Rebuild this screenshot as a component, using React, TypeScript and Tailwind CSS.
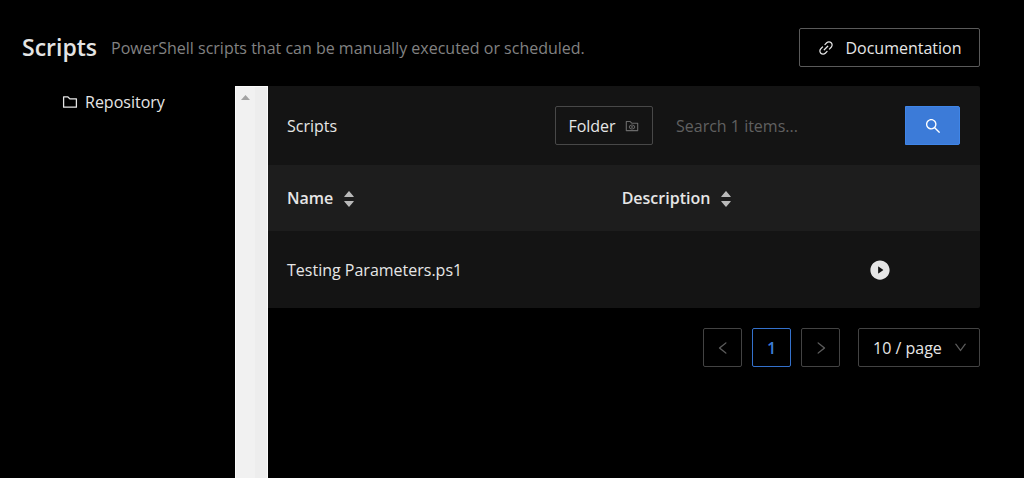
import { useState } from 'react';
import type { ReactNode } from 'react';
import {
  AiFillCaretDown,
  AiFillCaretUp,
  AiFillPlayCircle,
  AiOutlineDown,
  AiOutlineFolder,
  AiOutlineFolderView,
  AiOutlineLeft,
  AiOutlineLink,
  AiOutlineRight,
  AiOutlineSearch,
} from 'react-icons/ai';

interface Script {
  name: string;
  description: string;
}

const scripts: Script[] = [{ name: 'Testing Parameters.ps1', description: '' }];

function PageHeader() {
  return (
    <header className="flex items-center justify-between pl-[22px] pr-11">
      <div className="flex items-center gap-[14px]">
        <h1 className="text-[23px] font-semibold text-[#e4e4e4]">Scripts</h1>
        <p className="text-base text-[#828282]">PowerShell scripts that can be manually executed or scheduled.</p>
      </div>
      <a href="#documentation" className="flex h-[39px] w-[181px] items-center justify-center gap-[10px] rounded-xs border border-[#5a5a5a] text-base">
        <AiOutlineLink className="size-[18px]" />
        Documentation
      </a>
    </header>
  );
}

function FolderTree() {
  return (
    <nav className="w-[235px] shrink-0 pl-[61px] pt-1">
      <a href="#repository" className="flex items-center gap-[6px] text-base">
        <AiOutlineFolder className="size-[18px]" />
        Repository
      </a>
    </nav>
  );
}

/** Empty scroll gutter between the tree and the list. */
function ScrollGutter() {
  return (
    <div className="flex w-[33px] shrink-0 border-x border-t border-[#fafafa] bg-[#ededed]">
      <div className="w-[19px] bg-[#f1f1f1] pl-[5px] pt-2">
        <svg className="h-[5px] w-[9px]" viewBox="0 0 9 5" fill="#a3a3a3">
          <path d="M4.500 0L9 5H0z" />
        </svg>
      </div>
    </div>
  );
}

function Toolbar() {
  const [query, setQuery] = useState('');

  return (
    <div className="flex h-[79px] items-center pl-[19px] pr-5">
      <h2 className="flex-1 text-base">Scripts</h2>
      <button type="button" className="flex h-[39px] w-[98px] items-center justify-center gap-2 rounded-xs border border-[#484848] text-base">
        Folder
        <AiOutlineFolderView className="size-4 text-[#6a6a6a]" />
      </button>
      <form className="flex w-[307px]" onSubmit={(event) => event.preventDefault()}>
        <input
          type="search"
          aria-label="Search scripts"
          placeholder={`Search ${scripts.length} items...`}
          value={query}
          onChange={(event) => setQuery(event.target.value)}
          className="h-[39px] min-w-0 flex-1 bg-transparent px-[23px] text-base outline-none placeholder:text-[#606060]"
        />
        <button type="submit" aria-label="Search" className="flex h-[39px] w-[55px] items-center justify-center rounded-r-xs border border-[#3f85e8] bg-[#3c7bd8]">
          <AiOutlineSearch className="size-[18px] text-white" />
        </button>
      </form>
    </div>
  );
}

function SortableHeader({ children }: { children: ReactNode }) {
  return (
    <button type="button" className="flex items-center gap-[9px] font-semibold">
      {children}
      <span className="flex flex-col pt-[2px] text-[#b9b9b9]">
        <AiFillCaretUp className="-mb-1 size-[14px]" />
        <AiFillCaretDown className="size-[14px]" />
      </span>
    </button>
  );
}

function ScriptTable() {
  return (
    <table className="w-full table-fixed text-left text-base">
      <thead>
        <tr className="h-[66px] bg-[#1d1d1d]">
          <th className="w-[47%] pl-[19px]"><SortableHeader>Name</SortableHeader></th>
          <th className="w-[35%] pl-[19px]"><SortableHeader>Description</SortableHeader></th>
          <th aria-label="Actions" />
        </tr>
      </thead>
      <tbody>
        {scripts.map((script) => (
          <tr key={script.name} className="h-[77px]">
            <td className="pl-[19px]">{script.name}</td>
            <td className="pl-[19px]">{script.description}</td>
            <td className="pl-[17px]">
              <button type="button" aria-label={`Run ${script.name}`} className="block">
                <AiFillPlayCircle className="size-[22px]" />
              </button>
            </td>
          </tr>
        ))}
      </tbody>
    </table>
  );
}

function Pagination() {
  return (
    <div className="mt-5 flex items-center justify-end gap-[10px]">
      <button type="button" aria-label="Previous page" className="flex size-[39px] items-center justify-center rounded-xs border border-[#434343] text-[#5c5c5c]">
        <AiOutlineLeft className="size-4" />
      </button>
      <button type="button" aria-current="page" className="flex size-[39px] items-center justify-center rounded-xs border border-[#3471cc] text-base font-semibold text-[#3c7bd8]">1</button>
      <button type="button" aria-label="Next page" className="flex size-[39px] items-center justify-center rounded-xs border border-[#434343] text-[#5c5c5c]">
        <AiOutlineRight className="size-4" />
      </button>
      <div className="relative ml-2">
        <select aria-label="Items per page" className="h-[39px] w-[122px] appearance-none rounded-xs border border-[#434343] bg-black pl-[14px] text-base">
          <option>10 / page</option>
          <option>20 / page</option>
          <option>50 / page</option>
        </select>
        <AiOutlineDown className="pointer-events-none absolute right-3 top-3 size-[15px] text-[#5c5c5c]" />
      </div>
    </div>
  );
}

export default function App() {
  return (
    <div className="flex min-h-screen flex-col bg-black pt-7 font-['Open_Sans','Noto_Sans',sans-serif] text-[#e6e6e6]">
      <PageHeader />
      <div className="mt-[19px] flex flex-1">
        <FolderTree />
        <ScrollGutter />
        <main className="min-w-0 flex-1 pr-11">
          <section className="overflow-hidden rounded-r-xs bg-[#141414]">
            <Toolbar />
            <ScriptTable />
          </section>
          <Pagination />
        </main>
      </div>
    </div>
  );
}
